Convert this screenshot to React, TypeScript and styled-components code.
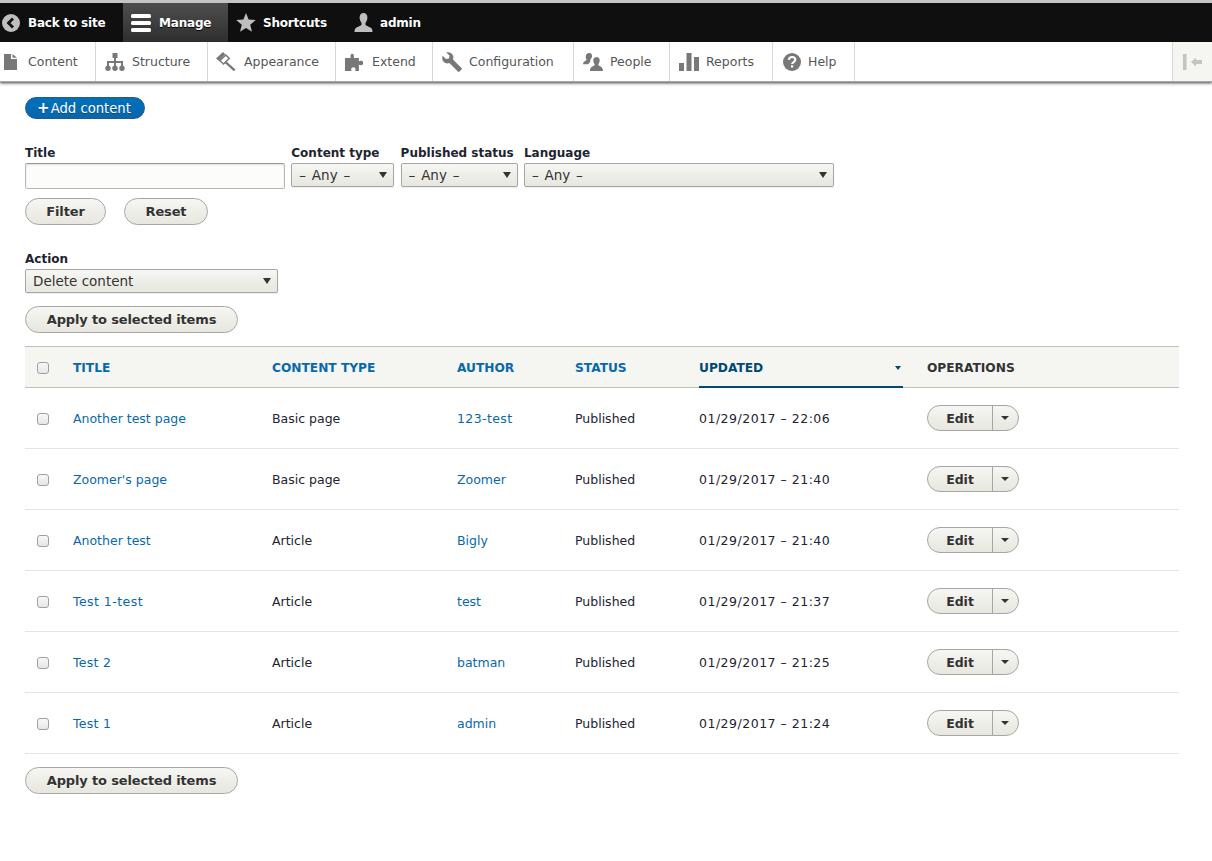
import React from "react";
import styled, { createGlobalStyle } from "styled-components";

const FONT = `"DejaVu Sans", Verdana, sans-serif`;

const GlobalStyle = createGlobalStyle`
  html, body {
    margin: 0;
    padding: 0;
    background: #fff;
    font-family: ${FONT};
    font-size: 13px;
    color: #222330;
  }
`;

const BackIcon = () => (
  <svg width="18" height="18" viewBox="0 0 18 18">
    <circle cx="9" cy="9" r="9" fill="#bebebe" />
    <path d="M11 4.500 6.500 9l4.500 4.500" fill="none" stroke="#111" strokeWidth="2.800" />
  </svg>
);

const BurgerIcon = () => (
  <svg width="20" height="18" viewBox="0 0 20 18">
    <rect x="0" y="0" width="20" height="4" rx="1.500" fill="#fff" />
    <rect x="0" y="7" width="20" height="4" rx="1.500" fill="#fff" />
    <rect x="0" y="14" width="20" height="4" rx="1.500" fill="#fff" />
  </svg>
);

const StarIcon = () => (
  <svg width="20" height="19" viewBox="0 0 20 19">
    <path d="M10 0l2.600 6.600 7.200.5-5.600 4.600 1.800 7L10 14.900l-6 3.800 1.800-7L.2 7.100l7.200-.5z" fill="#bebebe" />
  </svg>
);

const UserIcon = () => (
  <svg width="19" height="19" viewBox="0 0 19 19">
    <path d="M9.500 0C12 0 13.400 2 13.400 4.600c0 2.200-.9 4-1.900 5.200v1.700c0 1 3.200 2 5.300 3.300 1.200.7 1.700 1.900 1.700 4.200H.5c0-2.300.5-3.500 1.700-4.200 2.100-1.300 5.300-2.300 5.300-3.300V9.800C6.500 8.600 5.600 6.800 5.600 4.600 5.600 2 7 0 9.500 0z" fill="#bebebe" />
  </svg>
);

const ContentIcon = () => (
  <svg width="13" height="16" viewBox="0 0 13 16">
    <path d="M0 0h7v5h6v11H0zM8.500 0 13 3.800H8.500z" fill="#787878" />
  </svg>
);

const StructureIcon = () => (
  <svg width="20" height="18" viewBox="0 0 20 18">
    <g fill="#787878">
      <rect x="7.500" y="0" width="5" height="5" rx=".5" />
      <rect x="9" y="4" width="2" height="10" />
      <rect x="2" y="8" width="16" height="2" />
      <rect x="2" y="8" width="2" height="6" />
      <rect x="16" y="8" width="2" height="6" />
      <circle cx="3" cy="15.200" r="2.700" />
      <circle cx="10" cy="15.200" r="2.700" />
      <circle cx="17" cy="15.200" r="2.700" />
    </g>
  </svg>
);

const AppearanceIcon = () => (
  <svg width="20" height="19" viewBox="0 0 20 19">
    <path d="M0 6.500 7 0l2.200 2.200L2.700 8.800z" fill="#787878" />
    <path d="M9.800 3 13.200 6.500 7.500 12 3.800 8.600z" fill="none" stroke="#787878" strokeWidth="1.500" />
    <path d="M10.500 9.500 19.500 17.500 17.800 19.200 8.800 11z" fill="#787878" />
  </svg>
);

const ExtendIcon = () => (
  <svg width="20" height="18" viewBox="0 0 20 18">
    <path d="M0 5h5.500V2.800C5.500 1.500 6.300.8 7.200.8s1.700.7 1.700 2V5h5v3.500c1-.8 2.200-.9 3.300-.4 1.400.6 1.400 3.200 0 3.800-1.100.5-2.300.4-3.300-.4V18H10c.6-1 .7-2.200.1-3-.8-1-2.800-1-3.500 0-.6.800-.5 2 .1 3H0z" fill="#787878" />
  </svg>
);

const WrenchIcon = () => (
  <svg width="20" height="20" viewBox="0 0 20 20">
    <path d="M.6 3.800 4 7 7 6.500 7.500 3.500 4.200.4C7-.4 10 .8 11 3.500 11.600 5 11.400 6.400 11 7.400L19.500 15.900C20 16.400 20 17 19.500 17.500L17.500 19.500C17 20 16.400 20 15.900 19.500L7.400 11C6.400 11.400 5 11.600 3.500 11 .8 10-.4 7 .6 3.800Z" fill="#787878" />
  </svg>
);

const PeopleIcon = () => (
  <svg width="20" height="18" viewBox="0 0 20 18">
    <path d="M6.300 0C8 0 9 1.300 9 3c0 1-.4 2.100-1 2.800-.9 1.100-1 2.300-.6 2.900L5 11.200H0c0-2.500 1.800-3 3-3.800.6-.4.600-1 .2-1.600C2.600 5 2.800 4 2.800 3 3 1.300 4.400 0 6.300 0z" fill="#787878" />
    <path d="M13.500 4c2 0 3.200 1.500 3.200 3.500 0 1.400-.5 2.500-1.200 3.300-.3.500-.3 1.200.2 1.600 1.300.9 4.300 1.100 4.300 5.600H7c0-4.500 3-4.700 4.300-5.600.5-.4.500-1.100.2-1.600-.7-.8-1.200-1.900-1.200-3.300 0-2 1.200-3.500 3.400-3.500z" fill="#787878" />
  </svg>
);

const ReportsIcon = () => (
  <svg width="20" height="18" viewBox="0 0 20 18">
    <rect x="0" y="10" width="5" height="8" fill="#787878" />
    <rect x="7.500" y="0" width="5" height="18" fill="#787878" />
    <rect x="15" y="4" width="5" height="14" fill="#787878" />
  </svg>
);

const HelpIcon = () => (
  <svg width="18" height="18" viewBox="0 0 18 18">
    <circle cx="9" cy="9" r="9" fill="#787878" />
    <path d="M5.800 6.800C6 5 7.300 4 9.100 4c1.900 0 3.200 1.100 3.200 2.700 0 2.300-3.200 2.300-3.200 4.300" fill="none" stroke="#fff" strokeWidth="2.100" />
    <rect x="8" y="12.300" width="2.200" height="2.200" fill="#fff" />
  </svg>
);

const CollapseIcon = () => (
  <svg width="19" height="16" viewBox="0 0 19 16">
    <rect x="0" y="0" width="3.500" height="16" fill="#c4c4c4" />
    <path d="M8 8l5-4.500V6h6v4h-6v2.500z" fill="#c4c4c4" />
  </svg>
);

const TOOLBAR_TABS = [
  { label: "Back to site", width: 123, icon: <BackIcon />, gap: 8, pad: 2 },
  { label: "Manage", width: 105, icon: <BurgerIcon />, gap: 8, pad: 8, active: true },
  { label: "Shortcuts", width: 117, icon: <StarIcon />, gap: 7, pad: 8 },
  { label: "admin", width: 100, icon: <UserIcon />, gap: 7, pad: 9 },
];

const TRAY_ITEMS = [
  { label: "Content", width: 96, icon: <ContentIcon />, gap: 11, pad: 4 },
  { label: "Structure", width: 112, icon: <StructureIcon />, gap: 7, pad: 9 },
  { label: "Appearance", width: 128, icon: <AppearanceIcon />, gap: 8, pad: 8 },
  { label: "Extend", width: 97, icon: <ExtendIcon />, gap: 7, pad: 9 },
  { label: "Configuration", width: 141, icon: <WrenchIcon />, gap: 7, pad: 9 },
  { label: "People", width: 96, icon: <PeopleIcon />, gap: 7, pad: 9 },
  { label: "Reports", width: 103, icon: <ReportsIcon />, gap: 7, pad: 9 },
  { label: "Help", width: 82, icon: <HelpIcon />, gap: 7, pad: 10 },
];

const ROWS = [
  { title: "Another test page", type: "Basic page", author: "123-test", updated: "01/29/2017 – 22:06", titleSpacing: 0, authorSpacing: 0.4 },
  { title: "Zoomer's page", type: "Basic page", author: "Zoomer", updated: "01/29/2017 – 21:40", titleSpacing: 0, authorSpacing: 0 },
  { title: "Another test", type: "Article", author: "Bigly", updated: "01/29/2017 – 21:40", titleSpacing: 0, authorSpacing: 0 },
  { title: "Test 1-test", type: "Article", author: "test", updated: "01/29/2017 – 21:37", titleSpacing: 0.45, authorSpacing: 0 },
  { title: "Test 2", type: "Article", author: "batman", updated: "01/29/2017 – 21:25", titleSpacing: 0.3, authorSpacing: 0 },
  { title: "Test 1", type: "Article", author: "admin", updated: "01/29/2017 – 21:24", titleSpacing: 0.3, authorSpacing: 0 },
];

export default function App() {
  return (
    <>
      <GlobalStyle />
      <Toolbar>
        <TopBar>
          {TOOLBAR_TABS.map((t) => (
            <TopTab key={t.label} $width={t.width} $gap={t.gap} $pad={t.pad} $active={t.active}>
              {t.icon}
              <span>{t.label}</span>
            </TopTab>
          ))}
        </TopBar>
        <Tray>
          {TRAY_ITEMS.map((t) => (
            <TrayItem key={t.label} $width={t.width} $gap={t.gap} $pad={t.pad}>
              {t.icon}
              <span>{t.label}</span>
            </TrayItem>
          ))}
          <TrayToggle>
            <CollapseIcon />
          </TrayToggle>
        </Tray>
      </Toolbar>
      <Page>
        <AddButton href="#">
          <Plus>+</Plus>Add content
        </AddButton>
        <Filters>
          <Field>
            <Label>Title</Label>
            <TextInput type="text" />
          </Field>
          <Field>
            <Label>Content type</Label>
            <Select $width={103} $wordSpacing={1.5} label="– Any –" />
          </Field>
          <Field>
            <Label>Published status</Label>
            <Select $width={117} $wordSpacing={1.5} label="– Any –" />
          </Field>
          <Field>
            <Label>Language</Label>
            <Select $width={310} $wordSpacing={1.5} label="– Any –" />
          </Field>
        </Filters>
        <FilterActions>
          <Button $width={81}>Filter</Button>
          <Button $width={84}>Reset</Button>
        </FilterActions>
        <ActionField>
          <Label>Action</Label>
          <Select $width={253} $wordSpacing={0} label="Delete content" />
        </ActionField>
        <ApplyTop>
          <Button $width={213}>Apply to selected items</Button>
        </ApplyTop>
        <Table>
          <colgroup>
            <col width="48" />
            <col width="199" />
            <col width="185" />
            <col width="118" />
            <col width="124" />
            <col width="228" />
            <col />
          </colgroup>
          <thead>
            <tr>
              <CheckHead>
                <Checkbox type="checkbox" />
              </CheckHead>
              <Th><HeadLink>Title</HeadLink></Th>
              <Th><HeadLink>Content type</HeadLink></Th>
              <Th><HeadLink>Author</HeadLink></Th>
              <Th><HeadLink>Status</HeadLink></Th>
              <SortedTh>
                <SortInner>
                  Updated
                  <SortArrow />
                </SortInner>
              </SortedTh>
              <Th>Operations</Th>
            </tr>
          </thead>
          <tbody>
            {ROWS.map((r) => (
              <tr key={r.title}>
                <CheckCell>
                  <Checkbox type="checkbox" />
                </CheckCell>
                <Td><RowLink href="#" $spacing={r.titleSpacing}>{r.title}</RowLink></Td>
                <Td>{r.type}</Td>
                <Td><RowLink href="#" $spacing={r.authorSpacing}>{r.author}</RowLink></Td>
                <Td>Published</Td>
                <DateCell>{r.updated}</DateCell>
                <Td>
                  <DropButton>
                    <DropMain>Edit</DropMain>
                    <DropToggle />
                  </DropButton>
                </Td>
              </tr>
            ))}
          </tbody>
        </Table>
        <ApplyBottom>
          <Button $width={213}>Apply to selected items</Button>
        </ApplyBottom>
      </Page>
    </>
  );
}

const Select: React.FC<{ $width: number; $wordSpacing: number; label: string }> = ({ $width, $wordSpacing, label }) => (
  <SelectBox $width={$width}>
    <SelectInput defaultValue={label} $wordSpacing={$wordSpacing}>
      <option>{label}</option>
    </SelectInput>
  </SelectBox>
);

const Toolbar = styled.header`
  border-top: 3px solid #c4c4c4;
  box-shadow: 0 1px 2px rgba(0, 0, 0, 0.5), 0 2px 3px rgba(0, 0, 0, 0.25);
  background: #fff;
`;

const TopBar = styled.nav`
  display: flex;
  height: 39px;
  background: #0f0f0f;
`;

const TopTab = styled.a<{ $width: number; $gap: number; $pad: number; $active?: boolean }>`
  display: flex;
  align-items: center;
  box-sizing: border-box;
  width: ${(p) => p.$width}px;
  padding-left: ${(p) => p.$pad}px;
  gap: ${(p) => p.$gap}px;
  color: #fff;
  font-weight: 700;
  font-size: 12px;
  letter-spacing: -0.2px;
  text-shadow: 0 1px 0 #000;
  background: ${(p) => (p.$active ? "linear-gradient(#4e4e4e, #2e2e2e)" : "transparent")};
`;

const Tray = styled.nav`
  display: flex;
  height: 39px;
  background: #fff;
  border-bottom: 1px solid #aaa;
  box-sizing: content-box;
`;

const TrayItem = styled.a<{ $width: number; $gap: number; $pad: number }>`
  display: flex;
  align-items: center;
  box-sizing: border-box;
  width: ${(p) => p.$width}px;
  padding-left: ${(p) => p.$pad}px;
  gap: ${(p) => p.$gap}px;
  border-right: 1px solid #d8d8d8;
  color: #565656;
  font-size: 12.5px;
`;

const TrayToggle = styled.button`
  display: flex;
  align-items: center;
  justify-content: center;
  margin-left: auto;
  width: 40px;
  padding: 0;
  border: 0;
  border-left: 1px solid #d8d8d8;
  background: #f5f5f2;
`;

const Page = styled.main`
  padding: 15px 33px 0 25px;
`;

const AddButton = styled.a`
  display: inline-flex;
  align-items: center;
  justify-content: center;
  box-sizing: border-box;
  width: 120px;
  height: 22px;
  padding-right: 2px;
  border: 1px solid #1e5c90;
  border-radius: 20px;
  background: linear-gradient(#0071b8, #0a66ac);
  color: #fff;
  font-size: 13.2px;
  font-weight: 500;
  text-decoration: none;
  text-shadow: 0 1px 0 rgba(0, 0, 0, 0.3);
`;

const Plus = styled.span`
  font-size: 15px;
  font-weight: 700;
  line-height: 1;
  margin-right: 1px;
`;

const Filters = styled.div`
  display: flex;
  align-items: flex-start;
  gap: 6.3px;
  margin-top: 25px;
`;

const Field = styled.div`
  display: flex;
  flex-direction: column;
`;

const Label = styled.label`
  font-size: 12px;
  font-weight: 700;
  line-height: 19px;
  height: 19px;
  color: #222330;
`;

const TextInput = styled.input`
  box-sizing: border-box;
  width: 260px;
  height: 26px;
  margin: 0;
  border: 1px solid #b8b8b8;
  border-top-color: #999;
  border-radius: 2px;
  background: #fcfcfa;
  box-shadow: inset 0 1px 2px rgba(0, 0, 0, 0.12);
`;

const SelectBox = styled.div<{ $width: number }>`
  position: relative;
  width: ${(p) => p.$width}px;
  height: 24px;

  &::after {
    content: "";
    position: absolute;
    right: 7px;
    top: 9px;
    border-left: 4.5px solid transparent;
    border-right: 4.5px solid transparent;
    border-top: 6px solid #333;
    pointer-events: none;
  }
`;

const SelectInput = styled.select<{ $wordSpacing: number }>`
  appearance: none;
  box-sizing: border-box;
  width: 100%;
  height: 24px;
  margin: 0;
  padding: 0 20px 0 7px;
  border: 1px solid #a6a6a6;
  border-radius: 2px;
  background: linear-gradient(#f6f6f3, #e7e7df);
  color: #333;
  font-family: ${FONT};
  font-size: 13.5px;
  word-spacing: ${(p) => p.$wordSpacing}px;
  box-shadow: 0 1px 1px rgba(0, 0, 0, 0.08);
`;

const FilterActions = styled.div`
  display: flex;
  gap: 18px;
  margin-top: 9px;
`;

const Button = styled.button<{ $width: number }>`
  box-sizing: border-box;
  width: ${(p) => p.$width}px;
  height: 27px;
  padding: 0;
  border: 1px solid #a6a6a6;
  border-radius: 20px;
  background: linear-gradient(#f6f6f3, #e7e7df);
  color: #333;
  font-family: ${FONT};
  font-size: 13px;
  font-weight: 700;
  letter-spacing: -0.15px;
  text-shadow: 0 1px hsla(0, 0%, 100%, 0.6);
`;

const ActionField = styled.div`
  display: flex;
  flex-direction: column;
  align-items: flex-start;
  margin-top: 25px;
`;

const ApplyTop = styled.div`
  margin-top: 13px;
`;

const ApplyBottom = styled.div`
  margin-top: 13px;
`;

const Table = styled.table`
  width: 100%;
  margin-top: 13px;
  border-collapse: collapse;
  table-layout: fixed;
  font-size: 12.5px;
`;

const Th = styled.th`
  height: 39px;
  padding: 1px 0 0;
  background: #f5f5f2;
  border-top: 1px solid #bfbfba;
  border-bottom: 1px solid #bfbfba;
  color: #333;
  font-size: 12.2px;
  font-weight: 700;
  text-align: left;
  text-transform: uppercase;
`;

const CheckHead = styled(Th)`
  padding: 1px 0 0 12px;
`;

const HeadLink = styled.a`
  color: #0868ac;
`;

const SortedTh = styled(Th)`
  padding: 1px 24px 0 0;
  vertical-align: bottom;
`;

const SortInner = styled.div`
  position: relative;
  box-sizing: border-box;
  display: flex;
  align-items: center;
  justify-content: space-between;
  height: 39px;
  padding-right: 2px;
  border-bottom: 2px solid #004875;
  color: #004875;
  margin-bottom: -1px;
`;

const SortArrow = styled.span`
  width: 0;
  height: 0;
  border-left: 3.5px solid transparent;
  border-right: 3.5px solid transparent;
  border-top: 4px solid #004875;
`;

const Td = styled.td`
  height: 60px;
  padding: 0;
  border-bottom: 1px solid #e6e4df;
  color: #222330;
`;

const DateCell = styled(Td)`
  letter-spacing: 0.5px;
`;

const CheckCell = styled(Td)`
  padding-left: 12px;
`;

const RowLink = styled.a<{ $spacing: number }>`
  color: #0868ac;
  letter-spacing: ${(p) => p.$spacing}px;
  text-decoration: none;
`;

const Checkbox = styled.input`
  appearance: none;
  display: block;
  box-sizing: border-box;
  width: 12px;
  height: 12px;
  margin: 1px 0 0;
  border: 1px solid #a0a0a0;
  border-radius: 3px;
  background: linear-gradient(#f8f8f8, #e6e6e6);
`;

const DropButton = styled.div`
  display: flex;
  box-sizing: border-box;
  width: 92px;
  height: 26px;
  border: 1px solid #a6a6a6;
  border-radius: 20px;
  background: linear-gradient(#f6f6f3, #e7e7df);
  overflow: hidden;
`;

const DropMain = styled.button`
  flex: 1;
  padding: 0;
  border: 0;
  border-right: 1px solid #a6a6a6;
  background: transparent;
  color: #333;
  font-family: ${FONT};
  font-size: 12.5px;
  font-weight: 700;
`;

const DropToggle = styled.button`
  position: relative;
  width: 25px;
  padding: 0;
  border: 0;
  background: transparent;

  &::after {
    content: "";
    position: absolute;
    left: 8px;
    top: 10px;
    border-left: 4px solid transparent;
    border-right: 4px solid transparent;
    border-top: 4.5px solid #333;
  }
`;
